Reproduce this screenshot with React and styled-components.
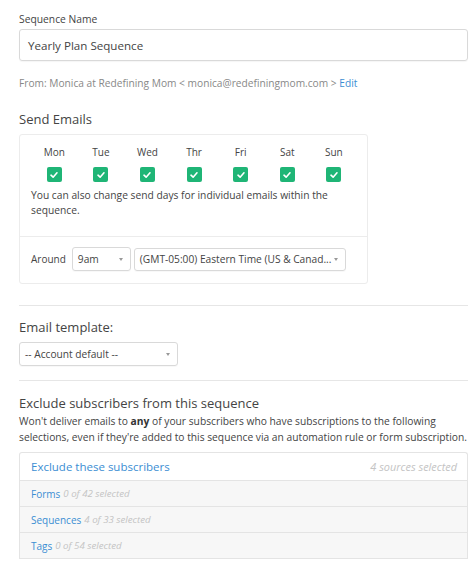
import React from "react";
import styled, { createGlobalStyle } from "styled-components";

const Global = createGlobalStyle`
  html, body { margin: 0; padding: 0; background: #fff; }
  body { font-family: "Open Sans", "Noto Sans", sans-serif; color: #4a4a4a; }
`;

const Page = styled.div`
  width: 449px;
  padding: 12px 0 0 19px;
`;

const Label = styled.div`
  font-size: 10.3px;
  line-height: 14px;
  color: #444;
  margin-bottom: 3px;
`;

const TextInput = styled.div`
  box-sizing: border-box;
  height: 32px;
  border: 1px solid #d9d9d9;
  border-radius: 3px;
  box-shadow: 0 1px 1px rgba(0,0,0,0.04);
  padding: 0 8px;
  display: flex;
  align-items: center;
  font-size: 11.6px;
  color: #444;
`;

const FromLine = styled.div`
  margin-top: 15px;
  font-size: 10.2px;
  line-height: 14px;
  color: #888;
`;

const Link = styled.a`
  color: #3b8ed3;
  text-decoration: none;
`;

const Heading = styled.div`
  font-size: 13px;
  line-height: 18px;
  color: #444;
  margin-top: ${p => p.$mt || 0}px;
`;

const Card = styled.div`
  box-sizing: border-box;
  width: 349px;
  margin-top: 6px;
  border: 1px solid #ececec;
  border-radius: 3px;
`;

const CardTop = styled.div`
  padding: 10px 11px 18px 11px;
  border-bottom: 1px solid #ececec;
`;

const Days = styled.div`
  display: grid;
  grid-template-columns: repeat(7, 46.6px);
`;

const Day = styled.div`
  display: flex;
  flex-direction: column;
  align-items: center;
  font-size: 10px;
  line-height: 14px;
  color: #444;
  gap: 8px;
`;

const Check = styled.span`
  width: 15px;
  height: 15px;
  border-radius: 2px;
  background: #1fb576;
  display: flex;
  align-items: center;
  justify-content: center;
`;

const Note = styled.div`
  margin-top: 6px;
  font-size: 10.25px;
  line-height: 15px;
  color: #444;
  padding-right: 10px;
`;

const CardBottom = styled.div`
  display: flex;
  align-items: center;
  padding: 10px 12px 12px 11px;
  font-size: 10px;
  color: #444;
`;

const Select = styled.div`
  box-sizing: border-box;
  width: ${p => p.$w}px;
  height: ${p => p.$h || 24}px;
  border: 1px solid #d9d9d9;
  border-radius: 3px;
  box-shadow: 0 1px 1px rgba(0,0,0,0.03);
  display: flex;
  align-items: center;
  justify-content: space-between;
  padding: 0 7px 0 5px;
  font-size: 10.2px;
  color: #444;
  margin-left: ${p => p.$ml || 0}px;
  margin-top: ${p => p.$mt || 0}px;
  white-space: nowrap;
`;

const Caret = styled.span`
  width: 0;
  height: 0;
  border-left: 2.5px solid transparent;
  border-right: 2.5px solid transparent;
  border-top: 3.5px solid #999;
`;

const Rule = styled.hr`
  border: none;
  border-top: 1px solid #e6e6e6;
  margin: ${p => p.$mt}px 0 0 0;
`;

const Para = styled.div`
  margin-top: 1px;
  font-size: 10.25px;
  line-height: 16px;
  color: #444;
  white-space: nowrap;
  b { font-weight: 700; color: #333; }
`;

const Panel = styled.div`
  margin-top: 7px;
  border: 1px solid #e4e4e4;
  border-bottom: none;
  border-radius: 3px 3px 0 0;
`;

const PanelHead = styled.div`
  height: 27px;
  display: flex;
  align-items: center;
  justify-content: space-between;
  padding: 0 10px 0 11px;
  border-bottom: 1px solid #e4e4e4;
`;

const HeadTitle = styled.span`
  color: #3b8ed3;
  font-size: 11.5px;
`;

const Muted = styled.span`
  color: #c4c4c4;
  font-style: italic;
  font-size: ${p => p.$fs || 9.7}px;
`;

const Row = styled.div`
  height: 25px;
  display: flex;
  align-items: center;
  gap: 3px;
  padding: 0 11px;
  background: #f7f7f7;
  border-bottom: 1px solid #e4e4e4;
  font-size: 10px;
`;

const RowLink = styled.span`
  color: #3b8ed3;
`;

const CheckIcon = () => (
  <svg width="10" height="10" viewBox="0 0 10 10">
    <path d="M2 5.2 L4.1 7.2 L8 2.8" fill="none" stroke="#fff" strokeWidth="1.6" strokeLinecap="round" strokeLinejoin="round" />
  </svg>
);

const days = ["Mon", "Tue", "Wed", "Thr", "Fri", "Sat", "Sun"];
const rows = [
  ["Forms", "0 of 42 selected"],
  ["Sequences", "4 of 33 selected"],
  ["Tags", "0 of 54 selected"],
];

export default function App() {
  return (
    <Page>
      <Global />
      <Label>Sequence Name</Label>
      <TextInput>Yearly Plan Sequence</TextInput>
      <FromLine>
        From: Monica at Redefining Mom &lt; monica@redefiningmom.com &gt; <Link href="#">Edit</Link>
      </FromLine>

      <Heading $mt={20}>Send Emails</Heading>
      <Card>
        <CardTop>
          <Days>
            {days.map(d => (
              <Day key={d}>
                {d}
                <Check><CheckIcon /></Check>
              </Day>
            ))}
          </Days>
          <Note>You can also change send days for individual emails within the sequence.</Note>
        </CardTop>
        <CardBottom>
          Around
          <Select $w={59} $ml={6}>9am<Caret /></Select>
          <Select $w={212} $h={23} $ml={3}>(GMT-05:00) Eastern Time (US &amp; Canad...<Caret /></Select>
        </CardBottom>
      </Card>

      <Rule $mt={21} />
      <Heading $mt={12}>Email template:</Heading>
      <Select $w={159} $h={24} $mt={6}>-- Account default --<Caret /></Select>
      <Rule $mt={14} />

      <Heading $mt={13}>Exclude subscribers from this sequence</Heading>
      <Para>
        Won't deliver emails to <b>any</b> of your subscribers who have subscriptions to the following<br />
        selections, even if they're added to this sequence via an automation rule or form subscription.
      </Para>
      <Panel>
        <PanelHead>
          <HeadTitle>Exclude these subscribers</HeadTitle>
          <Muted $fs={10.9}>4 sources selected</Muted>
        </PanelHead>
        {rows.map(([a, b]) => (
          <Row key={a}>
            <RowLink>{a}</RowLink>
            <Muted>{b}</Muted>
          </Row>
        ))}
      </Panel>
    </Page>
  );
}
